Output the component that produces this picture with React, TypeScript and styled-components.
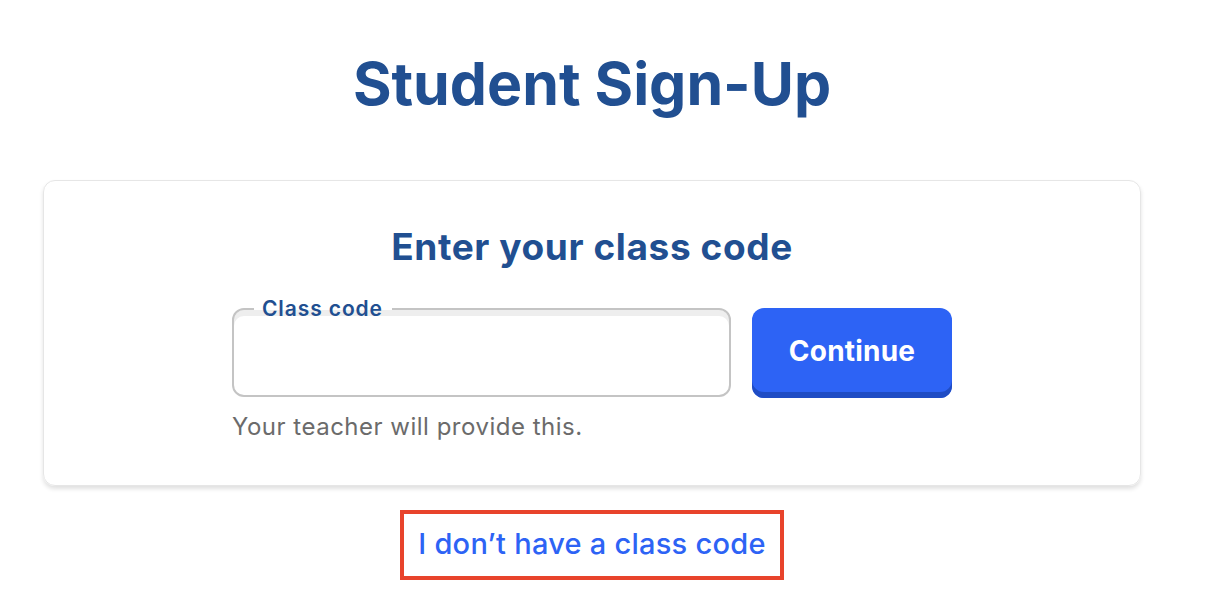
import React from "react";
import styled, { createGlobalStyle } from "styled-components";

const Global = createGlobalStyle`
  html, body { margin: 0; padding: 0; background: #ffffff; }
  body { font-family: "Inter", "Open Sans", sans-serif; }
`;

const Page = styled.div`
  width: 1184px;
  display: flex;
  flex-direction: column;
  align-items: center;
  padding-top: 44px;
`;

const Title = styled.h1`
  margin: 0;
  font-size: 59px;
  line-height: 80px;
  font-weight: 700;
  color: #214f91;
`;

const Card = styled.section`
  box-sizing: border-box;
  width: 1098px;
  margin-top: 56px;
  height: 306px;
  border: 1px solid #e6e6e6;
  border-radius: 12px;
  box-shadow: 0 3px 4px rgba(0, 0, 0, 0.12);
  display: flex;
  flex-direction: column;
  align-items: center;
  padding-top: 42px;
`;

const CardTitle = styled.h2`
  margin: 0;
  font-size: 37px;
  line-height: 48px;
  font-weight: 700;
  letter-spacing: 0.6px;
  color: #214f91;
`;

const Row = styled.div`
  display: flex;
  align-items: flex-start;
  gap: 21px;
  margin-top: 37px;
`;

const Field = styled.div`
  display: flex;
  flex-direction: column;
`;

const InputBox = styled.fieldset`
  box-sizing: border-box;
  margin: -10px 0 0;
  width: 499px;
  height: 99px;
  border: 2px solid #c4c4c4;
  border-radius: 12px;
  padding: 0 16px;
  box-shadow: inset 0 6px 0 #eeeeee;
`;

const Legend = styled.legend`
  padding: 0 9px 0 8px;
  margin-left: 4px;
  font-size: 21px;
  line-height: 22px;
  font-weight: 600;
  letter-spacing: 0.9px;
  color: #214f91;
`;

const Input = styled.input`
  width: 100%;
  border: none;
  outline: none;
  background: transparent;
  font-family: inherit;
  font-size: 24px;
  margin-top: 14px;
`;

const Helper = styled.div`
  margin-top: 14px;
  font-size: 24px;
  line-height: 32px;
  letter-spacing: 0.5px;
  color: #6b6b6b;
`;

const Button = styled.button`
  box-sizing: border-box;
  width: 200px;
  height: 90px;
  border: none;
  border-radius: 12px;
  background: #2d63f5;
  box-shadow: inset 0 -6px 0 #1f4cc4;
  color: #fff;
  font-family: inherit;
  font-weight: 700;
  font-size: 28px;
  letter-spacing: 0.2px;
  padding-bottom: 6px;
  cursor: pointer;
`;

const LinkBox = styled.div`
  margin-top: 24px;
  border: 4px solid #e8432b;
  padding: 10px 14px 12px;
`;

const Link = styled.a`
  font-size: 29px;
  line-height: 40px;
  font-weight: 500;
  letter-spacing: 0.25px;
  color: #2d63f5;
  text-decoration: none;
`;

export default function App() {
  return (
    <>
      <Global />
      <Page>
        <Title>Student Sign-Up</Title>
        <Card>
          <CardTitle>Enter your class code</CardTitle>
          <Row>
            <Field>
              <InputBox>
                <Legend>Class code</Legend>
                <Input aria-label="Class code" />
              </InputBox>
              <Helper>Your teacher will provide this.</Helper>
            </Field>
            <Button>Continue</Button>
          </Row>
        </Card>
        <LinkBox>
          <Link href="#">I don’t have a class code</Link>
        </LinkBox>
      </Page>
    </>
  );
}
